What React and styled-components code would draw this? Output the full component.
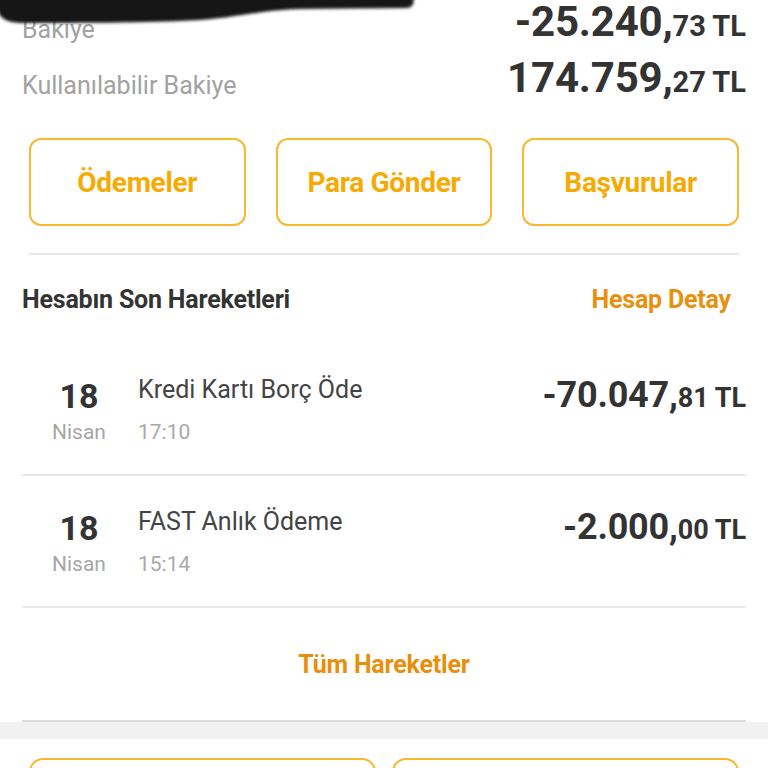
import React from "react";
import styled, { createGlobalStyle } from "styled-components";

const GlobalStyle = createGlobalStyle`
  html, body { margin: 0; padding: 0; background: #ffffff; }
  body { font-family: Roboto, "Noto Sans", "Liberation Sans", sans-serif; -webkit-font-smoothing: antialiased; }
  * { box-sizing: border-box; }
`;

const Screen = styled.div`
  position: relative;
  width: 768px;
  height: 768px;
  overflow: hidden;
  background: #ffffff;
`;

const Redaction = styled.svg`
  position: absolute;
  left: 0;
  top: 0;
  width: 420px;
  height: 30px;
`;

const TopCard = styled.section`
  background: #ffffff;
`;

const Balances = styled.div`
  padding: 0 22px;
  display: flex;
  flex-direction: column;
  gap: 12px;
`;

const BalanceRow = styled.div`
  display: flex;
  justify-content: space-between;
  align-items: baseline;
  height: 44px;
  line-height: 44px;
`;

const Label = styled.span`
  font-size: 25px;
  color: #a2a2a2;
  position: relative;
  top: 2px;
`;

const Amount = styled.span`
  font-weight: 700;
  color: #333333;
  font-size: ${(p) => p.$size}px;
  letter-spacing: -0.2px;
`;

const Cents = styled.span`
  font-size: ${(p) => p.$size}px;
  letter-spacing: 0;
`;

const ActionGrid = styled.div`
  display: grid;
  grid-template-columns: repeat(3, 1fr);
  gap: 30px;
  padding: 0 29px;
  margin-top: 38px;
`;

const ActionButton = styled.button`
  height: 88px;
  border: 2px solid #f7b832;
  border-radius: 12px;
  background: #ffffff;
  color: #f5ab04;
  font-family: Roboto, sans-serif;
  font-weight: 700;
  font-size: 28px;
  padding: 0;
  letter-spacing: -0.3px;
`;

const SoftDivider = styled.div`
  height: 2px;
  background: #e6e6e6;
  margin: 27px 29px 0;
`;

const SectionHeader = styled.div`
  height: 89px;
  display: flex;
  align-items: center;
  justify-content: space-between;
  padding: 0 37px 0 22px;
`;

const SectionTitle = styled.h2`
  margin: 0;
  font-size: 25px;
  font-weight: 700;
  color: #333333;
  letter-spacing: -0.2px;
`;

const LinkText = styled.span`
  font-size: 25px;
  font-weight: 700;
  color: #e8900e;
  letter-spacing: -0.2px;
`;

const List = styled.div`
  margin: 0 22px;
`;

const TxRow = styled.div`
  display: flex;
  align-items: flex-start;
  padding: 34px 0 24px;
  border-bottom: 2px solid #e9e9e9;
`;

const DateCol = styled.div`
  width: 114px;
  display: flex;
  flex-direction: column;
  align-items: center;
  flex-shrink: 0;
`;

const Day = styled.div`
  font-size: 34px;
  line-height: 36px;
  font-weight: 700;
  color: #333333;
`;

const Month = styled.div`
  font-size: 21px;
  line-height: 36px;
  color: #a6a6a6;
`;

const Info = styled.div`
  flex: 1;
  padding-left: 2px;
  display: flex;
  flex-direction: column;
`;

const TxTitle = styled.div`
  font-size: 25px;
  line-height: 24px;
  color: #444444;
`;

const TxTime = styled.div`
  margin-top: 12px;
  font-size: 21px;
  line-height: 36px;
  color: #a9a9a9;
`;

const TxAmount = styled.div`
  line-height: 34px;
  white-space: nowrap;
`;

const FooterLink = styled.div`
  height: 112px;
  display: flex;
  align-items: center;
  justify-content: center;
`;

const CardShadow = styled.div`
  height: 2px;
  margin: 0 22px;
  background: #dcdcdc;
`;

const GreyBand = styled.div`
  height: 17px;
  background: #f1f1f1;
`;

const BottomGrid = styled.div`
  display: grid;
  grid-template-columns: 347px 347px;
  gap: 16px;
  padding: 19px 0 0 29px;
`;

const BottomButton = styled.div`
  height: 80px;
  border: 2px solid #f7b832;
  border-radius: 14px;
`;

const Money = ({ main, cents, big, small }) => (
  <Amount $size={big}>
    {main}
    <Cents $size={small}>{cents} TL</Cents>
  </Amount>
);

const transactions = [
  { day: "18", month: "Nisan", title: "Kredi Kartı Borç Öde", time: "17:10", main: "-70.047,", cents: "81" },
  { day: "18", month: "Nisan", title: "FAST Anlık Ödeme", time: "15:14", main: "-2.000,", cents: "00" },
];

export default function App() {
  return (
    <Screen>
      <GlobalStyle />
      <TopCard>
        <Balances>
          <BalanceRow>
            <Label>Bakiye</Label>
            <Money main="-25.240," cents="73" big={42} small={29} />
          </BalanceRow>
          <BalanceRow>
            <Label>Kullanılabilir Bakiye</Label>
            <Money main="174.759," cents="27" big={42} small={29} />
          </BalanceRow>
        </Balances>
        <ActionGrid>
          <ActionButton>Ödemeler</ActionButton>
          <ActionButton>Para Gönder</ActionButton>
          <ActionButton>Başvurular</ActionButton>
        </ActionGrid>
        <SoftDivider />
        <SectionHeader>
          <SectionTitle>Hesabın Son Hareketleri</SectionTitle>
          <LinkText>Hesap Detay</LinkText>
        </SectionHeader>
        <List>
          {transactions.map((t, i) => (
            <TxRow key={i}>
              <DateCol>
                <Day>{t.day}</Day>
                <Month>{t.month}</Month>
              </DateCol>
              <Info>
                <TxTitle>{t.title}</TxTitle>
                <TxTime>{t.time}</TxTime>
              </Info>
              <TxAmount>
                <Money main={t.main} cents={t.cents} big={36} small={27} />
              </TxAmount>
            </TxRow>
          ))}
        </List>
        <FooterLink>
          <LinkText>Tüm Hareketler</LinkText>
        </FooterLink>
        <CardShadow />
      </TopCard>
      <GreyBand />
      <BottomGrid>
        <BottomButton />
        <BottomButton />
      </BottomGrid>
      <Redaction viewBox="0 0 420 30">
        <defs>
          <filter id="soft" x="-5%" y="-50%" width="110%" height="200%">
            <feGaussianBlur stdDeviation="1.4" />
          </filter>
        </defs>
        <path
          d="M-5,-5 H408 C416,-5 416,8 406,8 L300,9 C262,10 240,17 200,20 C150,23 60,23 22,23 C8,23 1,19 -2,12 Z"
          fill="#121212"
          filter="url(#soft)"
        />
      </Redaction>
    </Screen>
  );
}
